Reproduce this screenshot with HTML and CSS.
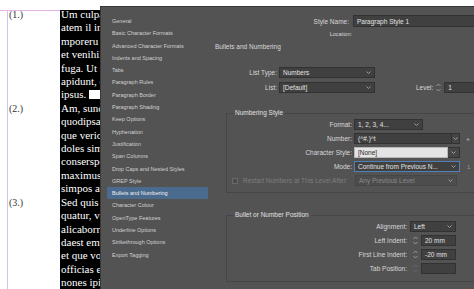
FILE: index.html
```html
<!DOCTYPE html>
<html lang="en">
<head>
  <meta charset="UTF-8" />
  <title>Paragraph Style Options</title>
  <link rel="stylesheet" href="styles.css">
</head>
<body>
  <div class="screen">

    <!-- Document page behind the dialog -->
    <div class="page">
      <div class="spread">
        <div class="margin-col">
          <div class="guide">
            <div class="num">(1.)</div>
            <div class="num">(2.)</div>
            <div class="num">(3.)</div>
          </div>
        </div>
        <div class="story">
          <div class="story-text">
            <div>Um culpa</div>
            <div>atem il in</div>
            <div>mporeru</div>
            <div>et venihil</div>
            <div>fuga. Ut e</div>
            <div>apidunt, o</div>
            <div>ipsus. <span class="cursor"></span></div>
            <div>Am, sunc</div>
            <div>quodipsa</div>
            <div>que verio</div>
            <div>doles sim</div>
            <div>conserspe</div>
            <div>maximus</div>
            <div>simpos au</div>
            <div>Sed quis</div>
            <div>quatur, ve</div>
            <div>alicaborr</div>
            <div>daest emp</div>
            <div>et que vo</div>
            <div>officias ei</div>
            <div>nones ipi</div>
          </div>
        </div>
      </div>
    </div>

    <!-- Paragraph Style Options dialog -->
    <div class="dialog">
      <ul class="cats">
        <li>General</li>
        <li>Basic Character Formats</li>
        <li>Advanced Character Formats</li>
        <li>Indents and Spacing</li>
        <li>Tabs</li>
        <li>Paragraph Rules</li>
        <li>Paragraph Border</li>
        <li>Paragraph Shading</li>
        <li>Keep Options</li>
        <li>Hyphenation</li>
        <li>Justification</li>
        <li>Span Columns</li>
        <li>Drop Caps and Nested Styles</li>
        <li>GREP Style</li>
        <li class="on">Bullets and Numbering</li>
        <li>Character Colour</li>
        <li>OpenType Features</li>
        <li>Underline Options</li>
        <li>Strikethrough Options</li>
        <li>Export Tagging</li>
      </ul>

      <div class="pane">
        <div class="row name-row">
          <span class="lbl name-lbl">Style Name:</span>
          <span class="field name-field">Paragraph Style 1</span>
        </div>
        <div class="row loc-row">
          <span class="lbl loc-lbl">Location:</span>
        </div>
        <div class="heading">Bullets and Numbering</div>

        <div class="row first-list">
          <span class="lbl list-lbl">List Type:</span>
          <span class="field select list-field">Numbers
            <svg class="chev" viewBox="0 0 5 3"><polyline points="0.5,0.5 2.5,2.5 4.5,0.5"/></svg>
          </span>
        </div>
        <div class="row list-row">
          <span class="lbl list-lbl">List:</span>
          <span class="field select list-field">[Default]
            <svg class="chev" viewBox="0 0 5 3"><polyline points="0.5,0.5 2.5,2.5 4.5,0.5"/></svg>
          </span>
          <span class="lbl level-lbl">Level:</span>
          <svg class="spin" viewBox="0 0 7 11"><polyline points="1.5,4 3.5,2 5.5,4"/><polyline points="1.5,7 3.5,9 5.5,7"/></svg>
          <span class="field level-field">1</span>
        </div>

        <fieldset class="group num-group">
          <legend>Numbering Style</legend>
          <div class="row">
            <span class="lbl ns-lbl">Format:</span>
            <span class="field select format-field">1, 2, 3, 4...
              <svg class="chev" viewBox="0 0 5 3"><polyline points="0.5,0.5 2.5,2.5 4.5,0.5"/></svg>
            </span>
          </div>
          <div class="row">
            <span class="lbl ns-lbl">Number:</span>
            <span class="field number-field">(^#.)^t</span>
            <span class="drop">
              <svg class="chev" viewBox="0 0 5 3"><polyline points="0.5,0.5 2.5,2.5 4.5,0.5"/></svg>
            </span>
            <span class="more">&#9656;</span>
          </div>
          <div class="row">
            <span class="lbl ns-lbl">Character Style:</span>
            <span class="field light char-field">[None]</span>
            <span class="drop char-drop">
              <svg class="chev" viewBox="0 0 5 3"><polyline points="0.5,0.5 2.5,2.5 4.5,0.5"/></svg>
            </span>
          </div>
          <div class="row">
            <span class="lbl ns-lbl">Mode:</span>
            <span class="field select focus mode-field">Continue from Previous N...
              <svg class="chev" viewBox="0 0 5 3"><polyline points="0.5,0.5 2.5,2.5 4.5,0.5"/></svg>
            </span>
            <span class="more">1</span>
          </div>
          <div class="row restart-row">
            <span class="restart">
              <span class="check"></span>
              Restart Numbers at This Level After:
            </span>
            <span class="field select off restart-field">Any Previous Level
              <svg class="chev" viewBox="0 0 5 3"><polyline points="0.5,0.5 2.5,2.5 4.5,0.5"/></svg>
            </span>
          </div>
        </fieldset>

        <fieldset class="group pos-group">
          <legend>Bullet or Number Position</legend>
          <div class="row">
            <span class="lbl pos-lbl">Alignment:</span>
            <span class="field select align-field">Left
              <svg class="chev" viewBox="0 0 5 3"><polyline points="0.5,0.5 2.5,2.5 4.5,0.5"/></svg>
            </span>
          </div>
          <div class="row">
            <span class="lbl pos-lbl indent-lbl">Left Indent:</span>
            <svg class="spin" viewBox="0 0 7 11"><polyline points="1.5,4 3.5,2 5.5,4"/><polyline points="1.5,7 3.5,9 5.5,7"/></svg>
            <span class="field indent-field">20 mm</span>
          </div>
          <div class="row">
            <span class="lbl pos-lbl indent-lbl">First Line Indent:</span>
            <svg class="spin" viewBox="0 0 7 11"><polyline points="1.5,4 3.5,2 5.5,4"/><polyline points="1.5,7 3.5,9 5.5,7"/></svg>
            <span class="field indent-field">-20 mm</span>
          </div>
          <div class="row">
            <span class="lbl pos-lbl indent-lbl">Tab Position:</span>
            <svg class="spin dim" viewBox="0 0 7 11"><polyline points="1.5,4 3.5,2 5.5,4"/><polyline points="1.5,7 3.5,9 5.5,7"/></svg>
            <span class="field indent-field"></span>
          </div>
        </fieldset>
      </div>
    </div>

  </div>
</body>
</html>
```

FILE: styles.css
```css
body {
  margin: 0;
  background: #ffffff;
  width: 474px;
  height: 289px;
  overflow: hidden;
}

.screen {
  display: flex;
  height: 289px;
}

/* Document page */
.page {
  width: 100px;
  flex: none;
  padding-top: 10px;
  box-sizing: border-box;
  display: flex;
  flex-direction: column;
}

.spread {
  flex: 1;
  display: flex;
}

.margin-col {
  width: 60px;
  border-top: 1px solid #e6b6ea;
  padding-left: 7px;
  box-sizing: border-box;
}

.guide {
  height: 100%;
  border-left: 1px solid #cdc4f4;
  padding-left: 1px;
  display: flow-root;
}

.num {
  font: 10px/13.4px "Liberation Serif", serif;
  color: #333;
  height: 93.8px;
}

.num:first-child {
  margin-top: -3px;
}

.story {
  width: 40px;
  background: #000;
  overflow: hidden;
  display: flow-root;
}

.story-text {
  margin-top: -2px;
  padding-left: 1px;
  color: #fff;
  font: 11px/13.4px "Liberation Serif", serif;
  white-space: nowrap;
}

.cursor {
  display: inline-block;
  width: 14px;
  height: 9px;
  background: #fff;
  vertical-align: -1px;
}

/* Dialog */
.dialog {
  flex: 1;
  min-width: 0;
  margin-top: 6px;
  background: #535353;
  border-top: 1px solid #383838;
  border-left: 1px solid #383838;
  display: flex;
  overflow: hidden;
  font-family: "Liberation Sans", Arial, sans-serif;
  color: #d8d8d8;
}

.cats {
  list-style: none;
  margin: 0;
  padding: 8px 0 0 6px;
  width: 107px;
  flex: none;
  box-sizing: border-box;
  font-size: 5.5px;
  color: #d0d0d0;
}

.cats li {
  padding-left: 5px;
  line-height: 12.3px;
  white-space: nowrap;
}

.cats li.on {
  background: #4a6a8e;
  color: #f2f2f2;
}

.pane {
  width: 290px;
  flex: none;
  font-size: 6.5px;
}

.row {
  display: flex;
  align-items: center;
  height: 11px;
  white-space: nowrap;
}

.lbl {
  flex: none;
  text-align: right;
}

.field {
  flex: none;
  height: 11px;
  box-sizing: border-box;
  display: flex;
  align-items: center;
  justify-content: space-between;
  padding: 0 3px;
  background: #404040;
  border: 1px solid #323232;
  color: #e2e2e2;
  overflow: hidden;
}

.chev {
  width: 5px;
  height: 3px;
  flex: none;
  fill: none;
  stroke: #b4b4b4;
  stroke-width: 0.8;
}

.spin {
  width: 7px;
  height: 11px;
  flex: none;
  fill: none;
  stroke: #a8a8a8;
  stroke-width: 0.8;
}

.spin.dim {
  stroke: #707070;
}

/* Top rows */
.name-row {
  margin-top: 8px;
  height: 12px;
}

.name-lbl {
  width: 141px;
  margin-right: 4px;
}

.name-field {
  width: 140px;
  height: 12px;
}

.loc-row {
  margin-top: 3px;
  height: 8px;
}

.loc-lbl {
  width: 144px;
  font-size: 5.5px;
}

.heading {
  margin-top: 4px;
  padding-left: 7px;
  line-height: 10px;
}

.first-list {
  margin-top: 15px;
}

.list-row {
  margin-top: 4px;
}

.list-lbl {
  width: 69px;
  margin-right: 2px;
}

.list-field {
  width: 96px;
}

.level-lbl {
  margin-left: 41px;
  margin-right: 2px;
}

.spin + .level-field {
  margin-left: 2px;
}

.level-field {
  width: 40px;
  justify-content: flex-start;
}

/* Group boxes */
.group {
  margin: 0 0 0 18px;
  padding: 0;
  border: 1px solid #464646;
  min-width: 0;
}

.group legend {
  margin-left: 6px;
  padding: 0 2px;
  line-height: 8px;
  color: #e0e0e0;
}

.group .row + .row {
  margin-top: 3px;
}

.group legend + .row {
  margin-top: 2px;
}

.num-group {
  margin-top: 16px;
  padding-bottom: 6px;
}

.ns-lbl {
  width: 125px;
  margin-right: 2px;
}

.format-field {
  width: 69px;
}

.number-field {
  width: 98px;
}

.drop {
  flex: none;
  width: 8px;
  height: 11px;
  box-sizing: border-box;
  display: flex;
  align-items: center;
  justify-content: center;
  background: #464646;
  border: 1px solid #323232;
  border-left: none;
}

.char-drop {
  width: 12px;
}

.char-field {
  width: 94px;
}

.field.light {
  background: #e4e4e4;
  border-color: #b8b8b8;
  color: #2a2a2a;
  justify-content: flex-start;
}

.field.focus {
  border-color: #4f80b8;
}

.mode-field {
  width: 106px;
}

.more {
  margin-left: 7px;
  color: #9a9a9a;
  font-size: 6px;
}

.group .restart-row {
  margin-top: 8px;
}

.restart {
  width: 128px;
  flex: none;
  display: flex;
  align-items: center;
  color: #7e7e7e;
}

.check {
  width: 6px;
  height: 6px;
  margin: 0 5px 0 5px;
  box-sizing: border-box;
  border: 1px solid #6a6a6a;
  background: #4a4a4a;
}

.field.off {
  background: #4d4d4d;
  border-color: #464646;
  color: #8a8a8a;
}

.restart-field {
  width: 102px;
}

.pos-group {
  margin-top: 18px;
  padding-bottom: 7px;
}

.pos-lbl {
  width: 180px;
  margin-right: 3px;
}

.align-field {
  width: 46px;
}

.indent-lbl {
  margin-right: 5px;
}

.indent-lbl + .spin {
  margin-right: 2px;
}

.indent-field {
  width: 35px;
  justify-content: flex-start;
}
```
